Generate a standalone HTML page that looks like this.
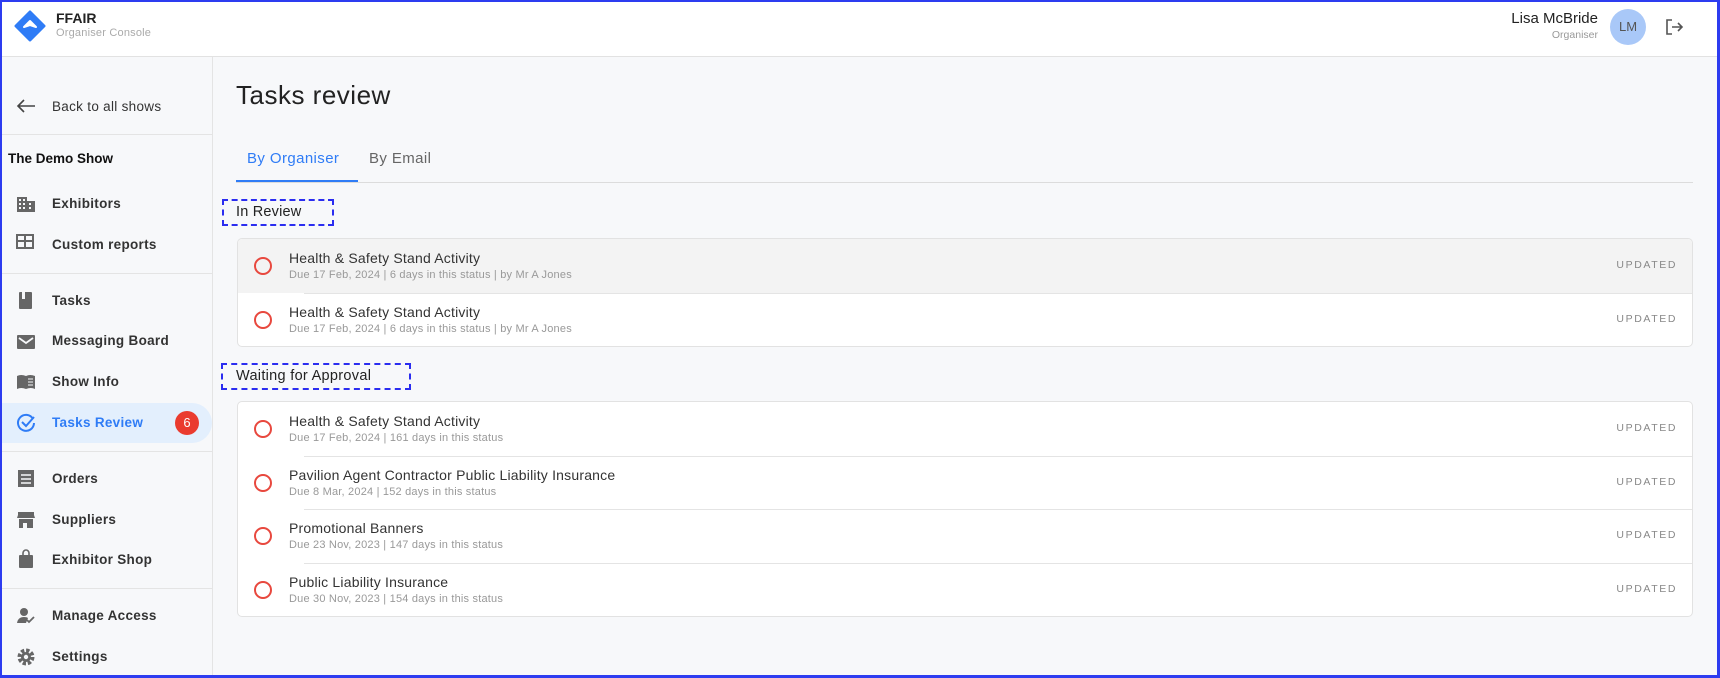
<!DOCTYPE html>
<html><head><meta charset="utf-8"><style>
*{box-sizing:border-box;margin:0;padding:0}
body{width:1720px;height:678px;overflow:hidden;background:#f7f8fa;font-family:"Liberation Sans",sans-serif;position:relative;color:#333}
.frame{position:absolute;left:0;top:0;width:1720px;height:678px;border:2px solid #2d3cf0;border-right-width:3px;border-bottom-width:3px;pointer-events:none;z-index:10}
.hdr{position:absolute;left:0;top:0;width:1720px;height:57px;background:#fff;border-bottom:1px solid #e2e2e2}
.side{position:absolute;left:0;top:57px;width:213px;height:621px;background:#f7f8fa;border-right:1px solid #e4e4e4}
.a{position:absolute;white-space:nowrap}
.nav{position:absolute;left:52px;font-size:13.5px;color:#333;font-weight:bold;letter-spacing:.3px}
.ico{position:absolute;left:16px;width:20px;height:20px}
.hr{position:absolute;left:0;width:213px;height:1px;background:#e4e4e4}
.card{position:absolute;left:237px;width:1456px;background:#fff;border:1px solid #e2e2e2;border-radius:5px;overflow:hidden}
.row{position:relative;height:53.5px}
.row+.row:before{content:"";position:absolute;left:66px;right:0;top:0;height:1px;background:#e4e4e4}
.circ{position:absolute;left:16px;top:18px;width:18px;height:18px;border:2px solid #e8483e;border-radius:50%}
.t{position:absolute;left:51px;top:11px;font-size:14px;color:#333;letter-spacing:.2px}
.s{position:absolute;left:51px;top:30px;font-size:11px;color:#999;letter-spacing:.2px}
.u{position:absolute;right:15px;top:20px;font-size:10.5px;letter-spacing:1.6px;color:#888}
.dash{position:absolute;border:2px dashed #2b2df0}
</style></head><body>
<div class="hdr"></div>
<svg class="a" style="left:14px;top:10px" width="32" height="32" viewBox="0 0 32 32"><path d="M16 2 L30 16 L16 30 L2 16 Z" fill="#2f7cf6" stroke="#2f7cf6" stroke-width="3" stroke-linejoin="round"/><path d="M10 17 L16 11 L22 17 L16 15 Z" fill="#fff" stroke="#fff" stroke-width="2" stroke-linejoin="round"/></svg>
<div class="a" style="left:56px;top:10px;font-size:14px;font-weight:bold;color:#222">FFAIR</div>
<div class="a" style="left:56px;top:27px;font-size:11px;color:#aaa;letter-spacing:.2px">Organiser Console</div>
<div class="a" style="right:122px;top:10px;font-size:15px;color:#222">Lisa McBride</div>
<div class="a" style="right:122px;top:29px;font-size:10.5px;color:#999">Organiser</div>
<div class="a" style="left:1610px;top:9px;width:36px;height:36px;border-radius:50%;background:#a9c8f8;color:#555;font-size:13px;text-align:center;line-height:36px">LM</div>
<svg class="a" style="left:1664px;top:17px" width="20" height="20" viewBox="0 0 20 20" fill="none" stroke="#555" stroke-width="1.6"><path d="M8 3H3v14h5"/><path d="M8 10h10M14 6l4 4-4 4"/></svg>

<div class="side"></div>
<svg class="a" style="left:16px;top:98px" width="20" height="16" viewBox="0 0 20 16" fill="none" stroke="#444" stroke-width="1.6"><path d="M19 8H2M8 2L2 8l6 6"/></svg>
<div class="nav" style="top:99px;font-weight:normal;color:#333">Back to all shows</div>
<div class="hr" style="top:134px"></div>
<div class="a" style="left:8px;top:151px;font-size:13.5px;font-weight:bold;color:#111">The Demo Show</div>
<svg class="ico" style="top:194px" viewBox="0 0 20 20" fill="#666"><path d="M1 3h10v15H1zM11 7h8v11h-8z"/><g fill="#f7f8fa"><rect x="3" y="5" width="2" height="2"/><rect x="7" y="5" width="2" height="2"/><rect x="3" y="9" width="2" height="2"/><rect x="7" y="9" width="2" height="2"/><rect x="3" y="13" width="2" height="2"/><rect x="7" y="13" width="2" height="2"/><rect x="13" y="9" width="2" height="2"/><rect x="13" y="13" width="2" height="2"/></g></svg>
<div class="nav" style="top:196px">Exhibitors</div>
<svg class="ico" style="top:233px" viewBox="0 0 20 20" fill="none" stroke="#666" stroke-width="2"><rect x="1" y="2" width="16" height="13"/><path d="M1 8h16M9 2v13"/></svg>
<div class="nav" style="top:237px">Custom reports</div>
<div class="hr" style="top:273px"></div>
<svg class="ico" style="top:291px" viewBox="0 0 20 20"><rect x="3" y="1" width="13" height="17" rx="1" fill="#666"/><rect x="6" y="1" width="3" height="7" fill="#f7f8fa"/></svg>
<div class="nav" style="top:293px">Tasks</div>
<svg class="ico" style="top:332px" viewBox="0 0 20 20"><rect x="1" y="3" width="18" height="14" rx="1" fill="#666"/><path d="M3 6l7 5 7-5" fill="none" stroke="#f7f8fa" stroke-width="1.8"/></svg>
<div class="nav" style="top:333px">Messaging Board</div>
<svg class="ico" style="top:372px" viewBox="0 0 20 20"><path d="M1 4q4-2 9 0v13q-5-2-9 0zM10 4q4-2 9 0v13q-4-2-9 0z" fill="#666"/><path d="M12 7h5M12 10h5M12 13h5" stroke="#f7f8fa" stroke-width="1"/></svg>
<div class="nav" style="top:374px">Show Info</div>
<div class="a" style="left:2px;top:403px;width:210px;height:40px;background:#e3effd;border-radius:0 20px 20px 0"></div>
<svg class="ico" style="top:413px" viewBox="0 0 20 20" fill="none" stroke="#2f7cf6" stroke-width="2"><path d="M17 6A8 8 0 1 0 18 10"/><path d="M6 9l4 4 8-9"/></svg>
<div class="nav" style="top:415px;color:#2f7cf6">Tasks Review</div>
<div class="a" style="left:175px;top:411px;width:24px;height:24px;border-radius:50%;background:#ea3b2f;color:#fff;font-size:13px;text-align:center;line-height:24px">6</div>
<div class="hr" style="top:451px"></div>
<svg class="ico" style="top:469px" viewBox="0 0 20 20"><rect x="2" y="1" width="16" height="17" fill="#666"/><path d="M5 6h10M5 10h10M5 14h10" stroke="#f7f8fa" stroke-width="1.6"/></svg>
<div class="nav" style="top:471px">Orders</div>
<svg class="ico" style="top:510px" viewBox="0 0 20 20"><path d="M2 2h16v3l1 3H1l1-3z" fill="#666"/><path d="M3 9h14v9H11v-5H7v5H3z" fill="#666"/></svg>
<div class="nav" style="top:512px">Suppliers</div>
<svg class="ico" style="top:549px" viewBox="0 0 20 20"><rect x="3" y="6" width="14" height="13" rx="1" fill="#666"/><path d="M7 7V4a3 3 0 0 1 6 0v3" fill="none" stroke="#666" stroke-width="1.6"/></svg>
<div class="nav" style="top:552px">Exhibitor Shop</div>
<div class="hr" style="top:588px"></div>
<svg class="ico" style="top:606px" viewBox="0 0 20 20" fill="#666"><circle cx="8" cy="6" r="4"/><path d="M1 17q1-6 7-6q3 0 4 1l-2 5z"/><path d="M11 14l2 2 5-5" fill="none" stroke="#666" stroke-width="1.8"/></svg>
<div class="nav" style="top:608px">Manage Access</div>
<svg class="ico" style="top:647px" viewBox="0 0 20 20"><circle cx="10" cy="10" r="6" fill="none" stroke="#666" stroke-width="5" stroke-dasharray="3 1.7"/><circle cx="10" cy="10" r="5" fill="#666"/><circle cx="10" cy="10" r="2.2" fill="#f7f8fa"/></svg>
<div class="nav" style="top:649px">Settings</div>

<div class="a" style="left:236px;top:80px;font-size:26px;color:#222;letter-spacing:.5px">Tasks review</div>
<div class="a" style="left:236px;top:182px;width:1457px;height:1px;background:#dcdcdc"></div>
<div class="a" style="left:236px;top:180px;width:122px;height:2px;background:#2f7cf6"></div>
<div class="a" style="left:247px;top:150px;font-size:15px;color:#2f7cf6;letter-spacing:.4px">By Organiser</div>
<div class="a" style="left:369px;top:150px;font-size:15px;color:#666;letter-spacing:.4px">By Email</div>

<div class="dash" style="left:222px;top:199px;width:112px;height:27px"></div>
<div class="a" style="left:236px;top:204px;font-size:14.5px;color:#222;letter-spacing:.2px">In Review</div>
<div class="card" style="top:238px">
<div class="row" style="background:#f3f3f3"><div class="circ"></div><div class="t">Health &amp; Safety Stand Activity</div><div class="s">Due 17 Feb, 2024 | 6 days in this status | by Mr A Jones</div><div class="u">UPDATED</div></div>
<div class="row"><div class="circ"></div><div class="t">Health &amp; Safety Stand Activity</div><div class="s">Due 17 Feb, 2024 | 6 days in this status | by Mr A Jones</div><div class="u">UPDATED</div></div>
</div>

<div class="dash" style="left:221px;top:363px;width:190px;height:27px"></div>
<div class="a" style="left:236px;top:368px;font-size:14.5px;color:#222;letter-spacing:.3px">Waiting for Approval</div>
<div class="card" style="top:401px">
<div class="row"><div class="circ"></div><div class="t">Health &amp; Safety Stand Activity</div><div class="s">Due 17 Feb, 2024 | 161 days in this status</div><div class="u">UPDATED</div></div>
<div class="row"><div class="circ"></div><div class="t">Pavilion Agent Contractor Public Liability Insurance</div><div class="s">Due 8 Mar, 2024 | 152 days in this status</div><div class="u">UPDATED</div></div>
<div class="row"><div class="circ"></div><div class="t">Promotional Banners</div><div class="s">Due 23 Nov, 2023 | 147 days in this status</div><div class="u">UPDATED</div></div>
<div class="row"><div class="circ"></div><div class="t">Public Liability Insurance</div><div class="s">Due 30 Nov, 2023 | 154 days in this status</div><div class="u">UPDATED</div></div>
</div>
<div class="frame"></div>
</body></html>
